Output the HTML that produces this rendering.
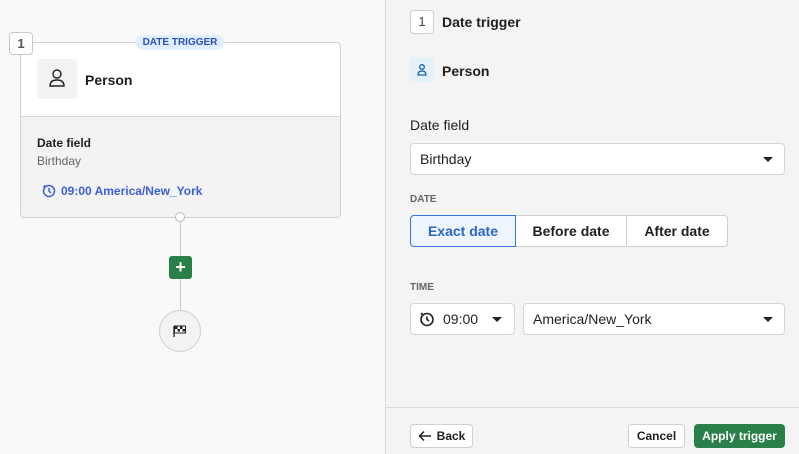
<!DOCTYPE html>
<html><head><style>
*{box-sizing:border-box;margin:0;padding:0}
body{width:799px;height:454px;overflow:hidden;font-family:"Liberation Sans",sans-serif;background:#f9f9f9;position:relative;color:#1f1f1f}
.a{position:absolute}
.b{font-weight:bold}
.sel{position:absolute;background:#fff;border:1px solid #d4d4d4;border-radius:4px;font-size:14px;display:flex;align-items:center;padding-left:9px}
.caret{position:absolute;right:11px;top:13px;width:0;height:0;border-left:5px solid transparent;border-right:5px solid transparent;border-top:5px solid #222}
.btn{position:absolute;background:#fff;border:1px solid #cfcfcf;border-radius:4px;font-size:12px;font-weight:bold;display:flex;align-items:center;justify-content:center}
</style></head><body>
<div class="a" style="left:20px;top:42px;width:321px;height:176px;border:1px solid #d0d0d0;border-radius:4px;background:#fff;overflow:hidden">
  <div class="a" style="left:0;top:73px;width:100%;height:103px;background:#f3f3f3;border-top:1px solid #d8d8d8"></div>
</div>
<div class="a" style="left:9px;top:32px;width:24px;height:23px;border:1px solid #c8c8c8;border-radius:4px;background:#fff;font-size:13px;font-weight:bold;color:#555;text-align:center;line-height:21px">1</div>
<div class="a" style="left:136px;top:35px;width:88px;height:15px;background:#e0efff;border-radius:7px;font-size:10px;font-weight:bold;color:#2c4fb8;text-align:center;line-height:15px">DATE TRIGGER</div>
<div class="a" style="left:37px;top:59px;width:40px;height:40px;background:#f3f3f3;border-radius:3px">
<svg width="40" height="40"><circle cx="20" cy="15" r="4" fill="none" stroke="#222" stroke-width="1.4"/><path d="M13 27 Q13 21 20 21 Q27 21 27 27 Z" fill="none" stroke="#222" stroke-width="1.4"/></svg></div>
<div class="a b" style="left:85px;top:72px;font-size:14px">Person</div>
<div class="a b" style="left:37px;top:136px;font-size:12px">Date field</div>
<div class="a" style="left:37px;top:154px;font-size:12px;color:#666">Birthday</div>
<svg class="a" style="left:41px;top:183px" width="16" height="16"><circle cx="8" cy="8" r="5.5" fill="none" stroke="#3d5fd9" stroke-width="1.5"/><path d="M8 5v3l2 2M4 2.5L2.5 4" fill="none" stroke="#3d5fd9" stroke-width="1.5"/></svg>
<div class="a b" style="left:61px;top:184px;font-size:12px;color:#3d5fd9">09:00 America/New_York</div>
<div class="a" style="left:180px;top:218px;width:1px;height:95px;background:#c8c8c8"></div>
<div class="a" style="left:175px;top:212px;width:10px;height:10px;border-radius:50%;border:1px solid #bbb;background:#fff"></div>
<div class="a" style="left:169px;top:256px;width:23px;height:23px;background:#2a8049;border-radius:3px;color:#fff;font-size:18px;font-weight:bold;text-align:center;line-height:22px">+</div>
<div class="a" style="left:159px;top:310px;width:42px;height:42px;border-radius:50%;border:1px solid #d0d0d0;background:#f3f3f3"></div>
<svg class="a" style="left:172px;top:324px" width="16" height="14"><path d="M2 13V2" stroke="#222" stroke-width="1.3"/><rect x="2.5" y="2" width="11" height="7" fill="#fff" stroke="#222"/><rect x="3" y="2.5" width="2.5" height="2.5" fill="#222"/><rect x="8" y="2.5" width="2.5" height="2.5" fill="#222"/><rect x="5.5" y="5" width="2.5" height="2.5" fill="#222"/><rect x="10.5" y="5" width="2.5" height="2.5" fill="#222"/></svg>
<div class="a" style="left:385px;top:0;width:414px;height:454px;background:#f4f4f4;border-left:1px solid #dcdcdc"></div>
<div class="a" style="left:410px;top:10px;width:24px;height:24px;border:1px solid #cfcfcf;border-radius:4px;background:#fff;font-size:13px;color:#444;text-align:center;line-height:22px">1</div>
<div class="a b" style="left:442px;top:14px;font-size:14px">Date trigger</div>
<div class="a" style="left:410px;top:58px;width:24px;height:24px;background:#e3f1fb;border-radius:3px">
<svg width="24" height="24"><circle cx="12" cy="9" r="2.3" fill="none" stroke="#1a5fa0" stroke-width="1.3"/><path d="M8 17 Q8 13 12 13 Q16 13 16 17 Z" fill="none" stroke="#1a5fa0" stroke-width="1.3"/></svg></div>
<div class="a b" style="left:442px;top:63px;font-size:14px">Person</div>
<div class="a" style="left:410px;top:117px;font-size:14px">Date field</div>
<div class="sel" style="left:410px;top:143px;width:375px;height:32px">Birthday<div class="caret"></div></div>
<div class="a b" style="left:410px;top:194px;font-size:10px;color:#666">DATE</div>
<div class="btn" style="left:410px;top:215px;width:106px;height:32px;font-size:14px;background:#eef5ff;border-color:#3a72d6;color:#2a66c9;z-index:2;border-radius:4px 0 0 4px">Exact date</div>
<div class="btn" style="left:515px;top:215px;width:112px;height:32px;font-size:14px;border-radius:0">Before date</div>
<div class="btn" style="left:626px;top:215px;width:102px;height:32px;font-size:14px;border-radius:0 4px 4px 0">After date</div>
<div class="a b" style="left:410px;top:282px;font-size:10px;color:#666">TIME</div>
<div class="sel" style="left:410px;top:303px;width:105px;height:32px;padding-left:32px">09:00<div class="caret" style="right:12px"></div></div>
<svg class="a" style="left:418px;top:310px" width="18" height="18"><circle cx="9" cy="9.5" r="6" fill="none" stroke="#222" stroke-width="1.6"/><path d="M9 6.5v3l2 1.5M4.5 3L3 4.5" fill="none" stroke="#222" stroke-width="1.6"/></svg>
<div class="sel" style="left:523px;top:303px;width:262px;height:32px">America/New_York<div class="caret"></div></div>
<div class="a" style="left:386px;top:407px;width:413px;height:1px;background:#dcdcdc"></div>
<div class="btn" style="left:410px;top:424px;width:63px;height:24px"><svg width="14" height="12" style="margin-right:5px"><path d="M13 6H2M6 1.5L1.5 6 6 10.5" fill="none" stroke="#222" stroke-width="1.5"/></svg>Back</div>
<div class="btn" style="left:628px;top:424px;width:57px;height:24px">Cancel</div>
<div class="btn" style="left:694px;top:424px;width:91px;height:24px;background:#2a8049;border-color:#2a8049;color:#fff">Apply trigger</div>
</body></html>
